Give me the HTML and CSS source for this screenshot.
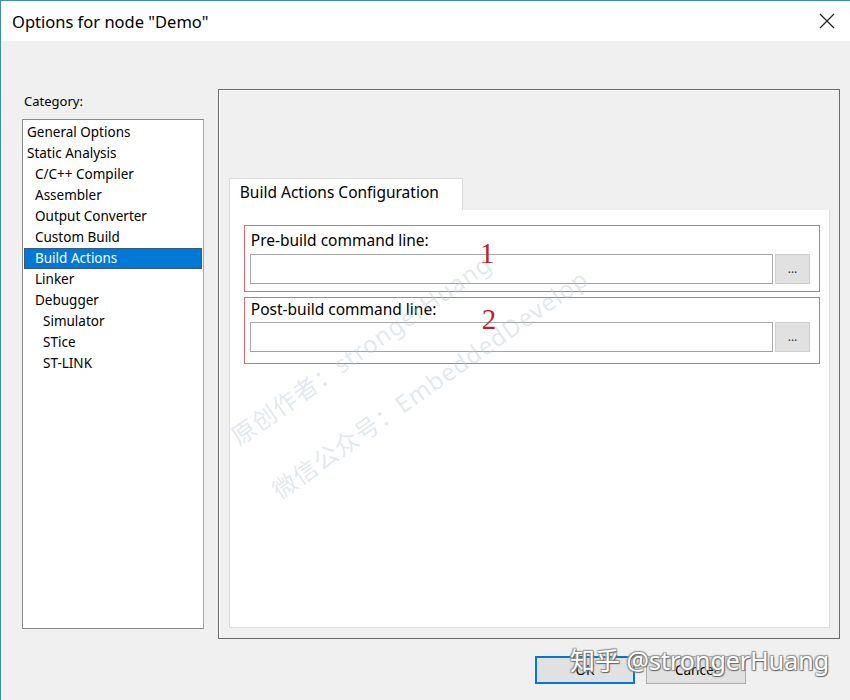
FILE: index.html
```html
<!DOCTYPE html>
<html>
<head>
<meta charset="utf-8">
<link rel="stylesheet" href="styles.css">
</head>
<body>
<div class="window">
  <div class="titlebar">
    <span class="title">Options for node "Demo"</span>
    <svg class="close" width="16" height="16" viewBox="0 0 16 16"><path d="M1 1 L15 15 M15 1 L1 15" stroke="#222" stroke-width="1.2" fill="none"/></svg>
  </div>
  <div class="content">
    <div class="main">
      <div class="leftcol">
        <div class="catlabel">Category:</div>
        <div class="listbox">
          <div class="item l0">General Options</div>
          <div class="item l0">Static Analysis</div>
          <div class="item l1">C/C++ Compiler</div>
          <div class="item l1">Assembler</div>
          <div class="item l1">Output Converter</div>
          <div class="item l1">Custom Build</div>
          <div class="item l1 sel">Build Actions</div>
          <div class="item l1">Linker</div>
          <div class="item l1">Debugger</div>
          <div class="item l2">Simulator</div>
          <div class="item l2">STice</div>
          <div class="item l2">ST-LINK</div>
        </div>
      </div>
      <div class="panel">
        <div class="tabs">
          <div class="tab">Build Actions Configuration</div>
        </div>
        <div class="page">
          <div class="group g1">
            <div class="glabel">Pre-build command line:</div>
            <div class="row">
              <div class="input"></div>
              <div class="browse">...</div>
            </div>
            <span class="num n1">1</span>
          </div>
          <div class="group g2">
            <div class="glabel">Post-build command line:</div>
            <div class="row">
              <div class="input"></div>
              <div class="browse">...</div>
            </div>
            <span class="num n2">2</span>
          </div>
        </div>
      </div>
    </div>
    <div class="buttons">
      <div class="btn ok">OK</div>
      <div class="btn">Cancel</div>
    </div>
  </div>
  <div class="wm wm1">原创作者：strongerHuang</div>
  <div class="wm wm2">微信公众号：EmbeddedDevelop</div>
  <div class="zhihu">知乎 @strongerHuang</div>
</div>
</body>
</html>
```
FILE: styles.css
```css
* { box-sizing: border-box; }
html, body { margin: 0; padding: 0; }
body {
  width: 850px;
  height: 700px;
  overflow: hidden;
  font-family: "Noto Sans", "Noto Sans CJK SC", sans-serif;
  color: #000;
}
.window {
  position: relative;
  width: 850px;
  height: 700px;
  background: #f0f0f0;
  border-left: 1px solid #3d8fb3;
  border-top: 1px solid #3d8fb3;
}
.titlebar {
  height: 40px;
  background: #fff;
  display: flex;
  align-items: center;
  justify-content: space-between;
  padding: 0 15px 0 11px;
}
.title { font-size: 16.5px; }
.close { display: block; }
.content {
  padding: 48px 10px 0 21px;
}
.main {
  display: flex;
  gap: 14px;
  height: 550px;
}
.leftcol {
  width: 182px;
  display: flex;
  flex-direction: column;
}
.catlabel {
  font-size: 13px;
  height: 30px;
  padding: 3px 0 0 2px;
}
.listbox {
  height: 510px;
  background: #fff;
  border: 1px solid #8a8a8a;
  border-right-color: #a8a8a8;
  padding-top: 2px;
}
.item {
  font-size: 13.5px;
  height: 21px;
  line-height: 20px;
  padding-left: 4px;
  white-space: nowrap;
}
.l1 { padding-left: 12px; }
.l2 { padding-left: 20px; }
.sel {
  background: #0078d7;
  color: #fff;
  margin: 0 1px;
  padding-left: 11px;
  outline: 1px solid #3a5a7a;
  outline-offset: -1px;
}
.panel {
  width: 623px;
  border: 1px solid #6a6a6a;
  box-shadow: inset 1px 1px 0 #fff;
  padding: 88px 9px 10px 10px;
  display: flex;
  flex-direction: column;
}
.tabs { display: flex; height: 32px; }
.tab {
  width: 234px;
  background: #fff;
  border: 1px solid #dcdcdc;
  border-bottom: none;
  font-size: 15.5px;
  padding: 2px 0 0 10px;
}
.page {
  flex: 1;
  background: #fff;
  border: 1px solid #dcdcdc;
  border-top: none;
  padding: 15px 9px 0 14px;
  display: flex;
  flex-direction: column;
  gap: 5px;
}
.group {
  position: relative;
  height: 67px;
  border: 1px solid #de6a74;
  padding: 3px 9px 0 5px;
}
.glabel {
  font-size: 15.5px;
  height: 25px;
  line-height: 22px;
  padding-left: 1px;
}
.g2 { padding-top: 0; }
.g2 .glabel { height: 24px; }
.row { display: flex; gap: 2px; }
.input {
  flex: 1;
  height: 30px;
  background: #fff;
  border: 1px solid #a9a9a9;
  border-bottom-color: #9aa3ab;
}
.browse {
  width: 35px;
  height: 30px;
  background: #e1e1e1;
  border: 1px solid #cfcfcf;
  font-size: 12px;
  text-align: center;
  line-height: 28px;
  color: #333;
}
.num {
  position: absolute;
  font-family: "Liberation Serif", serif;
  font-size: 29px;
  color: #c01f28;
  line-height: 1;
}
.n1 { left: 235px; top: 13px; }
.n2 { left: 237px; top: 7px; }
.buttons {
  display: flex;
  justify-content: flex-end;
  gap: 11px;
  padding: 17px 94px 0 0;
}
.btn {
  width: 100px;
  height: 28px;
  background: #e1e1e1;
  border: 1px solid #adadad;
  font-size: 13.5px;
  text-align: center;
  line-height: 26px;
}
.btn.ok {
  border: 2px solid #0078d7;
  line-height: 24px;
}
.wm {
  position: absolute;
  font-size: 24px;
  color: rgba(180, 195, 215, 0.38);
  white-space: nowrap;
  transform-origin: 0 100%;
  transform: rotate(-35deg);
  letter-spacing: 1px;
}
.wm1 { left: 242px; top: 416px; }
.wm2 { left: 283px; top: 470px; }
.zhihu {
  position: absolute;
  left: 569px;
  top: 640px;
  font-size: 25px;
  color: #fff;
  text-shadow: 1px 1px 1px #666, -1px -1px 1px #999, 1px -1px 1px #999, -1px 1px 1px #999;
  white-space: nowrap;
}
```
